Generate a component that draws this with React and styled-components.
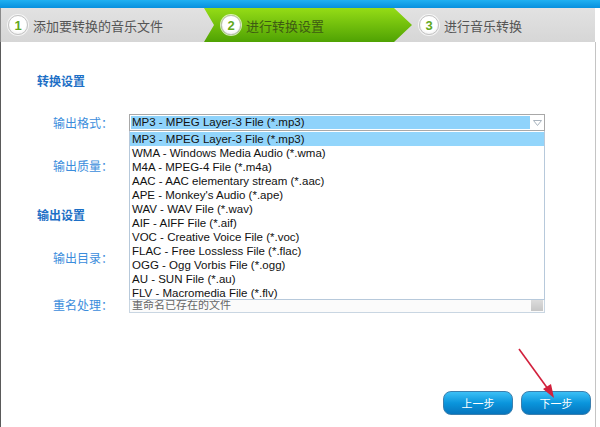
import React from 'react';
import styled, { createGlobalStyle } from 'styled-components';

const GlobalStyle = createGlobalStyle`
  body {
    margin: 0;
    background: #fff;
    font-family: "Noto Sans CJK SC", "Liberation Sans", sans-serif;
  }
`;

const formats = [
  'MP3 - MPEG Layer-3 File (*.mp3)',
  'WMA - Windows Media Audio (*.wma)',
  'M4A - MPEG-4 File (*.m4a)',
  'AAC - AAC elementary stream (*.aac)',
  "APE - Monkey's Audio (*.ape)",
  'WAV - WAV File (*.wav)',
  'AIF - AIFF File (*.aif)',
  'VOC - Creative Voice File (*.voc)',
  'FLAC - Free Lossless File (*.flac)',
  'OGG - Ogg Vorbis File (*.ogg)',
  'AU - SUN File (*.au)',
  'FLV - Macromedia File (*.flv)',
];

const steps = [
  { num: 1, label: '添加要转换的音乐文件', width: 203, pad: 7 },
  { num: 2, label: '进行转换设置', width: 208, pad: 17, active: true },
  { num: 3, label: '进行音乐转换', width: 150, pad: 7 },
];

const App = () => {
  return (
    <Page>
      <GlobalStyle />
      <TopBar />
      <Steps>
        {steps.map((s) => (
          <Step key={s.num} $width={s.width} $pad={s.pad} $active={s.active}>
            <StepNum>{s.num}</StepNum>
            <StepLabel $active={s.active}>{s.label}</StepLabel>
          </Step>
        ))}
      </Steps>
      <Content>
        <SectionTitle $top={31}>转换设置</SectionTitle>
        <Row $top={25}>
          <Label>输出格式：</Label>
          <SelectWrap>
            <Select $active>
              <SelectText>MP3 - MPEG Layer-3 File (*.mp3)</SelectText>
              <DropButton>
                <svg width="9" height="6" viewBox="0 0 9 6">
                  <path d="M0.5 0.5 L8.5 0.5 L4.5 5.5 Z" fill="none" stroke="#a9b4bf" strokeWidth="1" />
                </svg>
              </DropButton>
            </Select>
            <List>
              {formats.map((f, i) => (
                <Item key={f} $selected={i === 0}>{f}</Item>
              ))}
            </List>
          </SelectWrap>
        </Row>
        <Row $top={26}>
          <Label>输出质量：</Label>
          <Select />
        </Row>
        <SectionTitle $top={33}>输出设置</SectionTitle>
        <Row $top={26}>
          <Label>输出目录：</Label>
          <Select />
        </Row>
        <Row $top={30}>
          <Label>重名处理：</Label>
          <Select $muted>
            <SelectText $muted>重命名已存在的文件</SelectText>
            <ScrollButton />
          </Select>
        </Row>
        <Footer>
          <Button>上一步</Button>
          <Button>下一步</Button>
        </Footer>
        <Arrow width="42" height="56" viewBox="0 0 42 56">
          <line x1="2" y1="2" x2="31" y2="42" stroke="#d2203c" strokeWidth="1.6" />
          <path d="M37 51 L26 42 L34 37 Z" fill="#d2203c" />
        </Arrow>
      </Content>
    </Page>
  );
};

const Page = styled.div`
  width: 600px;
  height: 427px;
  display: flex;
  flex-direction: column;
  overflow: hidden;
  background: #fff;
`;

const TopBar = styled.div`
  height: 8px;
  background: linear-gradient(#1fb0f2, #0790de);
`;

const Steps = styled.div`
  height: 34px;
  display: flex;
  background: linear-gradient(#e2e2e2, #d6d6d6);
  margin-right: 5px;
  border-left: 1px solid #8a8a8a;
`;

const Step = styled.div`
  width: ${(p) => p.$width}px;
  flex-shrink: 0;
  display: flex;
  align-items: center;
  gap: 5px;
  padding-left: ${(p) => p.$pad}px;
  box-sizing: border-box;
  background: ${(p) => (p.$active ? 'linear-gradient(#95dc16, #4fa203)' : 'transparent')};
  clip-path: ${(p) =>
    p.$active
      ? 'polygon(0 0, 190px 0, 208px 50%, 190px 100%, 0 100%, 10px 50%)'
      : 'none'};
`;

const StepNum = styled.div`
  width: 20px;
  height: 20px;
  border-radius: 50%;
  box-sizing: border-box;
  border: 1px solid #c4c4c4;
  background: radial-gradient(circle at 50% 40%, #ffffff 55%, #e6e6e6 100%);
  box-shadow: 0 0 0 1px rgba(255, 255, 255, 0.7);
  display: flex;
  align-items: center;
  justify-content: center;
  font-family: "Liberation Sans", sans-serif;
  font-weight: bold;
  font-size: 13px;
  color: #62a81c;
`;

const StepLabel = styled.span`
  font-size: 13px;
  color: ${(p) => (p.$active ? '#3e5c12' : '#555')};
`;

const Content = styled.div`
  position: relative;
  flex: 1;
  display: flex;
  flex-direction: column;
  border-left: 1px solid #5a5a5a;
  border-right: 1px solid #c4c4c4;
  margin-right: 4px;
  padding-left: 36px;
`;

const SectionTitle = styled.div`
  margin-top: ${(p) => p.$top}px;
  height: 16px;
  line-height: 16px;
  font-size: 12px;
  font-weight: bold;
  color: #1d6fc6;
`;

const Row = styled.div`
  margin-top: ${(p) => p.$top}px;
  height: 17px;
  display: flex;
  align-items: center;
  padding-left: 16px;
`;

const Label = styled.div`
  width: 76px;
  font-size: 12px;
  color: #3b8ddc;
`;

const SelectWrap = styled.div`
  position: relative;
`;

const Select = styled.div`
  width: 416px;
  height: 17px;
  box-sizing: border-box;
  border: 1px solid ${(p) => (p.$muted ? '#c9d6e2' : '#a8a8a8')};
  background: ${(p) => (p.$active ? '#8fd3fb' : '#fbfbfb')};
  box-shadow: ${(p) => (p.$active ? 'inset 0 0 0 1px #fff' : 'none')};
  display: flex;
  align-items: center;
  justify-content: space-between;
`;

const SelectText = styled.span`
  padding-left: 2px;
  font-family: ${(p) => (p.$muted ? '"Noto Sans CJK SC", sans-serif' : '"Liberation Sans", sans-serif')};
  font-size: ${(p) => (p.$muted ? '11px' : '11.5px')};
  color: ${(p) => (p.$muted ? '#666' : '#111')};
  line-height: 15px;
`;

const DropButton = styled.div`
  width: 14px;
  height: 15px;
  background: #fff;
  display: flex;
  align-items: center;
  justify-content: center;
`;

const ScrollButton = styled.div`
  width: 12px;
  height: 13px;
  margin-right: 1px;
  background: linear-gradient(#e0e0e0, #c6c6c6);
`;

const List = styled.div`
  position: absolute;
  top: 17px;
  left: 0;
  width: 416px;
  height: 169px;
  box-sizing: border-box;
  border: 1px solid #b7c9db;
  border-top: none;
  background: #fff;
  z-index: 2;
  padding-top: 1px;
`;

const Item = styled.div`
  height: 14px;
  line-height: 14px;
  padding-left: 2px;
  font-family: "Liberation Sans", sans-serif;
  font-size: 11.5px;
  color: #111;
  background: ${(p) => (p.$selected ? '#92d5fb' : 'transparent')};
`;

const Footer = styled.div`
  margin-top: auto;
  display: flex;
  justify-content: flex-end;
  gap: 8px;
  padding: 0 4px 12px 0;
`;

const Button = styled.button`
  width: 70px;
  height: 24px;
  border: 1px solid #3b7fae;
  border-radius: 8px;
  background: linear-gradient(#3cc0f6, #0a95dc 50%, #0675bd);
  color: #fff;
  font-family: "Noto Sans CJK SC", sans-serif;
  font-size: 11px;
  padding: 0;
  cursor: pointer;
`;

const Arrow = styled.svg`
  position: absolute;
  left: 516px;
  top: 305px;
`;

export default App;
